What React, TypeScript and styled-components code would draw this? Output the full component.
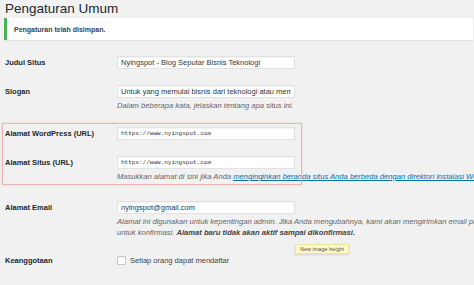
import React from "react";
import styled, { createGlobalStyle } from "styled-components";

const Global = createGlobalStyle`
  *, *::before, *::after { box-sizing: border-box; }
  html, body { margin: 0; padding: 0; background: #f1f1f1; overflow: hidden; }
  body { font-family: "Liberation Sans", Arial, sans-serif; color: #23282d; }
`;

const Wrap = styled.div`
  position: relative;
  width: 680px;
  height: 285px;
  padding-left: 5px;
`;

const Title = styled.h1`
  margin: 0;
  font-size: 13.5px;
  font-weight: 400;
  line-height: 18px;
  color: #23282d;
`;

const Notice = styled.div`
  margin-left: -1px;
  width: 469px;
  height: 22px;
  display: flex;
  align-items: center;
  padding-left: 7px;
  background: #fff;
  border-left: 3px solid #46b450;
  box-shadow: 0 1px 1px rgba(0, 0, 0, 0.06);
  font-size: 7px;
  font-weight: 700;
  color: #3c434a;
`;

const Form = styled.div`
  margin-top: 8px;
  display: flex;
  flex-direction: column;
`;

const Group = styled.div`
  position: relative;
  padding-bottom: 3px;
  &::after {
    content: "";
    position: absolute;
    left: -3px;
    top: 4px;
    bottom: 8px;
    width: 300px;
    border: 1px solid #ecb3b3;
    box-shadow: 0 0 2px rgba(230, 130, 130, 0.35);
    pointer-events: none;
  }
`;

const Row = styled.div`
  display: grid;
  grid-template-columns: 112px auto;
  align-items: start;
  padding: 8px 0;
`;

const Label = styled.div`
  font-size: 7.5px;
  font-weight: 700;
  line-height: 13px;
  color: #23282d;
  white-space: nowrap;
`;

const Field = styled.div`
  display: flex;
  flex-direction: column;
`;

const Input = styled.input<{ $mono?: boolean }>`
  width: 178px;
  height: 13px;
  margin: 0;
  padding: 0 3px;
  border: 1px solid #e2e2e2;
  box-shadow: inset 0 1px 1px rgba(0, 0, 0, 0.05);
  background: #fff;
  outline: none;
  color: #32373c;
  font-family: ${(p) =>
    p.$mono ? '"Liberation Mono", "DejaVu Sans Mono", monospace' : '"Liberation Sans", Arial, sans-serif'};
  font-size: ${(p) => (p.$mono ? "6px" : "7.5px")};
`;

const Hint = styled.div`
  margin-top: 2px;
  font-size: 7.6px;
  line-height: 11px;
  font-style: italic;
  color: #666;
  white-space: nowrap;
  a { color: #0073aa; text-decoration: underline; }
  b { color: #444; font-weight: 700; }
`;

const CheckLine = styled.label`
  display: flex;
  align-items: center;
  height: 13px;
  gap: 4px;
  font-size: 7.5px;
  color: #444;
`;

const Box = styled.span`
  width: 9px;
  height: 9px;
  background: #fff;
  border: 1px solid #c5c9cc;
  border-radius: 1px;
  box-shadow: inset 0 1px 1px rgba(0, 0, 0, 0.05);
`;

const Tip = styled.div`
  position: absolute;
  left: 295px;
  top: 244px;
  padding: 1px 4px;
  font-size: 5.5px;
  line-height: 6px;
  color: #555;
  background: #fdf8c8;
  border: 1px solid #ece3a8;
  box-shadow: 0 1px 2px rgba(0, 0, 0, 0.12);
  white-space: nowrap;
`;

export default function App() {
  return (
    <>
      <Global />
      <Wrap>
        <Title>Pengaturan Umum</Title>
        <Notice>Pengaturan telah disimpan.</Notice>
        <Form>
          <Row>
            <Label>Judul Situs</Label>
            <Field>
              <Input readOnly value="Nyingspot - Blog Seputar Bisnis Teknologi" />
            </Field>
          </Row>
          <Row>
            <Label>Slogan</Label>
            <Field>
              <Input readOnly value="Untuk yang memulai bisnis dari teknologi atau memulai teknologi dari bisnis" />
              <Hint>Dalam beberapa kata, jelaskan tentang apa situs ini.</Hint>
            </Field>
          </Row>
          <Group>
            <Row>
              <Label>Alamat WordPress (URL)</Label>
              <Field>
                <Input $mono readOnly value="https://www.nyingspot.com" />
              </Field>
            </Row>
            <Row>
              <Label>Alamat Situs (URL)</Label>
              <Field>
                <Input $mono readOnly value="https://www.nyingspot.com" />
                <Hint>
                  Masukkan alamat di sini jika Anda{" "}
                  <a href="#">menginginkan beranda situs Anda berbeda dengan direktori instalasi WordPress</a>.
                </Hint>
              </Field>
            </Row>
          </Group>
          <Row>
            <Label>Alamat Email</Label>
            <Field>
              <Input readOnly value="nyingspot@gmail.com" />
              <Hint>
                Alamat ini digunakan untuk kepentingan admin. Jika Anda mengubahnya, kami akan mengirimkan email pada alamat baru
                <br />
                untuk konfirmasi. <b>Alamat baru tidak akan aktif sampai dikonfirmasi.</b>
              </Hint>
            </Field>
          </Row>
          <Row>
            <Label>Keanggotaan</Label>
            <Field>
              <CheckLine>
                <Box />
                Setiap orang dapat mendaftar
              </CheckLine>
            </Field>
          </Row>
        </Form>
        <Tip>New image height</Tip>
      </Wrap>
    </>
  );
}
